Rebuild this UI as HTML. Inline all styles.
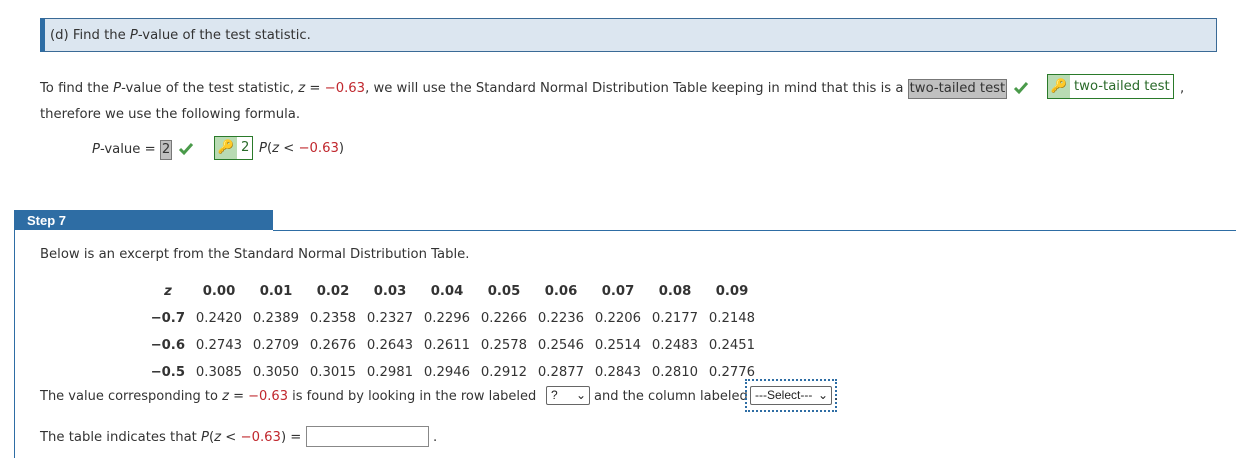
<!DOCTYPE html>
<html><head><meta charset="utf-8"><style>
body{margin:0;width:1236px;height:458px;overflow:hidden;background:#fff;font-family:"DejaVu Sans","Liberation Sans",sans-serif;font-size:13.2px;color:#333;position:relative}
.a{position:absolute;white-space:nowrap;line-height:16px;margin-top:1px}
.r{color:#c0272d}
i{font-style:italic}
.box{position:absolute;left:40px;top:18px;width:1171px;height:32px;background:#dce6f0;border:1px solid #3a6a96;border-left:5px solid #2e6da4}
.gray{display:inline-block;background:#c0c0c0;border:1px solid #777;padding:0 1px;line-height:18px}
.key{display:inline-block;border:1px solid #2a7a2a;color:#2a6a2a;line-height:23px;padding-right:3px}
.key b{display:inline-block;width:22px;background:#b9dbb3;text-align:center;font-weight:normal;margin-right:4px;color:#d9a520}
.ck{display:inline-block;vertical-align:middle;margin-left:6px}
.c{position:absolute;width:60px;text-align:center}
.l{position:absolute;width:40px;text-align:right;font-weight:bold;left:145px}
.sel{position:absolute;border:1px solid #666;border-radius:2px;background:#fff;height:17px;font-family:"Liberation Sans",sans-serif;font-size:12px;line-height:17px;padding-left:4px;color:#222}
</style></head><body>
<div class="box"></div>
<div class="a" style="left:50px;top:27px">(d) Find the <i>P</i>-value of the test statistic.</div>

<div class="a" style="left:40px;top:78px">To find the <i>P</i>-value of the test statistic, <i>z</i> = <span class="r">−0.63</span>, we will use the Standard Normal Distribution Table keeping in mind that this is a <span class="gray">two-tailed test</span><svg class="ck" width="16" height="14" viewBox="0 0 16 14"><path d="M2 7 L6 11 L14 2" fill="none" stroke="#4a9a4a" stroke-width="3"/></svg></div>
<div class="a" style="left:1047px;top:73px"><span class="key"><b>🔑</b>two-tailed test</span></div>
<div class="a" style="left:1180px;top:80px">,</div>
<div class="a" style="left:40px;top:106px">therefore we use the following formula.</div>

<div class="a" style="left:92px;top:139px"><i>P</i>-value = <span class="gray" style="line-height:18px">2</span><svg class="ck" width="16" height="14" viewBox="0 0 16 14"><path d="M2 7 L6 11 L14 2" fill="none" stroke="#4a9a4a" stroke-width="3"/></svg></div>
<div class="a" style="left:214px;top:135px"><span class="key" style="line-height:22px"><b>🔑</b>2</span></div>
<div class="a" style="left:259px;top:140px"><i>P</i>(<i>z</i> &lt; <span class="r">−0.63</span>)</div>

<div style="position:absolute;left:14px;top:210px;width:259px;height:20px;background:#2e6da4"></div>
<div class="a" style="left:27px;top:212px;color:#fff;font-family:'Liberation Sans',sans-serif;font-weight:bold;font-size:13px">Step 7</div>
<div style="position:absolute;left:273px;top:230px;width:963px;height:1px;background:#2e6da4"></div>
<div style="position:absolute;left:14px;top:230px;width:1px;height:228px;background:#2e6da4"></div>

<div class="a" style="left:40px;top:246px">Below is an excerpt from the Standard Normal Distribution Table.</div>

<div class="a" style="left:0;top:283px;width:1236px;height:16px">
<div class="c" style="left:138px;font-weight:bold;font-style:italic">z</div>
<div class="c" style="left:189px;font-weight:bold">0.00</div><div class="c" style="left:246px;font-weight:bold">0.01</div><div class="c" style="left:303px;font-weight:bold">0.02</div><div class="c" style="left:360px;font-weight:bold">0.03</div><div class="c" style="left:417px;font-weight:bold">0.04</div><div class="c" style="left:474px;font-weight:bold">0.05</div><div class="c" style="left:531px;font-weight:bold">0.06</div><div class="c" style="left:588px;font-weight:bold">0.07</div><div class="c" style="left:645px;font-weight:bold">0.08</div><div class="c" style="left:702px;font-weight:bold">0.09</div>
</div>
<div class="a" style="left:0;top:310px;width:1236px;height:16px">
<div class="l">−0.7</div>
<div class="c" style="left:189px">0.2420</div><div class="c" style="left:246px">0.2389</div><div class="c" style="left:303px">0.2358</div><div class="c" style="left:360px">0.2327</div><div class="c" style="left:417px">0.2296</div><div class="c" style="left:474px">0.2266</div><div class="c" style="left:531px">0.2236</div><div class="c" style="left:588px">0.2206</div><div class="c" style="left:645px">0.2177</div><div class="c" style="left:702px">0.2148</div>
</div>
<div class="a" style="left:0;top:337px;width:1236px;height:16px">
<div class="l">−0.6</div>
<div class="c" style="left:189px">0.2743</div><div class="c" style="left:246px">0.2709</div><div class="c" style="left:303px">0.2676</div><div class="c" style="left:360px">0.2643</div><div class="c" style="left:417px">0.2611</div><div class="c" style="left:474px">0.2578</div><div class="c" style="left:531px">0.2546</div><div class="c" style="left:588px">0.2514</div><div class="c" style="left:645px">0.2483</div><div class="c" style="left:702px">0.2451</div>
</div>
<div class="a" style="left:0;top:364px;width:1236px;height:16px">
<div class="l">−0.5</div>
<div class="c" style="left:189px">0.3085</div><div class="c" style="left:246px">0.3050</div><div class="c" style="left:303px">0.3015</div><div class="c" style="left:360px">0.2981</div><div class="c" style="left:417px">0.2946</div><div class="c" style="left:474px">0.2912</div><div class="c" style="left:531px">0.2877</div><div class="c" style="left:588px">0.2843</div><div class="c" style="left:645px">0.2810</div><div class="c" style="left:702px">0.2776</div>
</div>

<div class="a" style="left:40px;top:388px;font-size:13px">The value corresponding to <i>z</i> = <span class="r">−0.63</span> is found by looking in the row labeled</div>
<div class="sel" style="left:546px;top:386px;width:38px">?<span style="position:absolute;right:3px;top:0">⌄</span></div>
<div class="a" style="left:594px;top:388px;font-size:13px">and the column labeled</div>
<div style="position:absolute;left:745px;top:379px;width:88px;height:29px;border:2px dotted #2e6da4"></div>
<div class="sel" style="left:750px;top:386px;width:76px">---Select---<span style="position:absolute;right:3px;top:0">⌄</span></div>
<div class="a" style="left:834px;top:388px">.</div>

<div class="a" style="left:40px;top:429px">The table indicates that <i>P</i>(<i>z</i> &lt; <span class="r">−0.63</span>) =</div>
<div style="position:absolute;left:306px;top:426px;width:121px;height:19px;border:1px solid #888"></div>
<div class="a" style="left:433px;top:429px">.</div>
</body></html>
